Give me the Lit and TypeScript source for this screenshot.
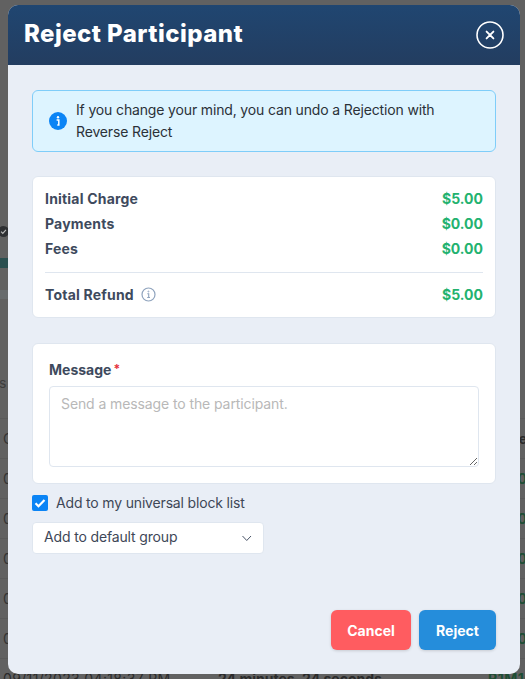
import { LitElement, html, css } from "lit";
import { customElement } from "lit/decorators.js";

@customElement("app-root")
export class AppRoot extends LitElement {
  static styles = css`
    :host { display: block; width: 525px; height: 679px; position: relative; overflow: hidden; font-family: "Inter", "Liberation Sans", sans-serif; background: #616161; }
    * { box-sizing: border-box; }
    .page { height: 679px; display: flex; flex-direction: column; background: #616161; color: #2f2f2f; overflow: hidden; }
    .check-dot { display: flex; align-items: center; justify-content: center; width: 11px; height: 11px; margin: 226px 0 0 -2px; background: #2e3033; border-radius: 50%; flex: none; }
    .check-dot svg { width: 7px; height: 7px; display: block; }
    .teal { height: 10px; width: 40px; margin-top: 21px; background: #2a4f50; flex: none; }
    .grey { height: 9px; width: 40px; margin-top: 22px; background: #676b6d; flex: none; }
    .s { margin-top: 76px; height: 16px; font-size: 14px; line-height: 16px; color: #3d3d3d; flex: none; margin-left: -1px; }
    .spacer { height: 27px; flex: none; }
    .row { height: 40px; display: flex; align-items: center; justify-content: space-between; font-size: 14px; color: #333; border-top: 1px solid #5a5a5a; flex: none; padding-left: 3px; }
    .row .g { color: #214f37; font-weight: 700; margin-right: -2px; }
    .row .h { color: #2b2b2b; font-weight: 700; margin-right: -2px; }
    .last { display: flex; height: 40px; font-size: 14px; line-height: 40px; flex: none; border-top: 1px solid #5a5a5a; padding-left: 3px; color: #2b2b2b; white-space: nowrap; }
    .last .date { width: 215px; flex: none; letter-spacing: .35px; }
    .last .dur { width: 270px; flex: none; font-weight: 700; }
    .last .code { flex: none; color: #1d4d33; font-weight: 700; letter-spacing: .5px; }

    .modal { position: absolute; left: 8px; top: 5px; width: 512px; height: 669px; background: #e9eef6; border-radius: 10px; overflow: hidden; display: flex; flex-direction: column; }
    .head { height: 60px; flex: none; display: flex; align-items: center; justify-content: space-between; padding: 0 16px; color: #fff; background: linear-gradient(#204671, #233d60); }
    h1 { margin: -3px 0 0; font-size: 24px; line-height: 28px; font-weight: 800; letter-spacing: 0.45px; }
    .close { width: 28px; height: 28px; display: block; }
    .content { flex: 1; display: flex; flex-direction: column; padding: 25px 24px 24px; }
    .alert { height: 62px; flex: none; display: flex; align-items: center; gap: 9px; padding: 0 16px; background: #ddf4ff; border: 1px solid #7fcdf9; border-radius: 6px; font-size: 14px; line-height: 22px; color: #2b3138; letter-spacing: -0.15px; }
    .alert svg { width: 18px; height: 18px; flex: none; }
    .card { background: #fff; border: 1px solid #dfe6ef; border-radius: 6px; }
    .summary { margin-top: 24px; height: 142px; padding: 9px 12px 0; flex: none; }
    .line { height: 25px; display: flex; align-items: center; justify-content: space-between; font-size: 14px; font-weight: 700; color: #3e4a5d; letter-spacing: 0.2px; }
    .amt { color: #23b26f; letter-spacing: 0; }
    .rule { height: 1px; background: #dfe6ef; margin: 11px 0 9px; }
    .total-label { display: flex; align-items: center; gap: 7px; }
    .total-label svg { width: 15px; height: 15px; }
    .message { margin-top: 25px; height: 141px; padding: 16px 16px 16px; flex: none; display: flex; flex-direction: column; }
    label.msg { height: 20px; font-size: 14px; line-height: 20px; font-weight: 700; color: #3e4a5d; margin-bottom: 6px; display: flex; gap: 2px; }
    .req { color: #e5303c; font-size: 12px; line-height: 18px; }
    textarea { display: block; width: 430px; height: 81px; flex: none; border: 1px solid #dfe6ef; border-radius: 4px; padding: 8px 11px; font: 14px/18px "Inter", "Liberation Sans", sans-serif; letter-spacing: -0.1px; background: #fff; color: #333; outline: none; resize: vertical; margin: 0; }
    textarea::placeholder { color: #b8b8b8; opacity: 1; }
    .chk { display: flex; align-items: center; gap: 8px; height: 16px; margin-top: 11px; font-size: 14px; color: #3e4757; flex: none; letter-spacing: -0.17px; }
    .chk .t { margin-top: -2px; }
    .box { width: 16px; height: 16px; background: #0b84f5; border-radius: 2px; display: block; flex: none; }
    .box svg { display: block; width: 16px; height: 16px; }
    .select { margin-top: 11px; width: 232px; height: 32px; flex: none; display: flex; align-items: center; justify-content: space-between; padding: 0 10px 0 11px; background: #fff; border: 1px solid #dfe6ef; border-radius: 4px; font-size: 14px; color: #3e4757; letter-spacing: -0.15px; }
    .select .t { margin-top: -3px; }
    .select svg { width: 12px; height: 12px; display: block; }
    .actions { margin-top: auto; display: flex; justify-content: flex-end; gap: 8px; }
    button { height: 40px; border: 0; border-radius: 6px; color: #fff; font: 700 14px "Inter", "Liberation Sans", sans-serif; box-shadow: 0 1px 3px rgba(0,0,0,.15); padding: 0; }
    .cancel { width: 80px; background: #ff5c60; }
    .reject { width: 77px; background: #258ddb; }
  `;

  render() {
    return html`
      <div class="page">
        <span class="check-dot"><svg viewBox="0 0 8 8" fill="none" stroke="#b9b9b9" stroke-width="1.3"><path d="M1.2 4.2l2 2 3.6-4"/></svg></span>
        <div class="teal"></div>
        <div class="grey"></div>
        <div class="s">s</div>
        <div class="spacer"></div>
        <div class="row"><span>O</span><span class="h">le</span></div>
        ${["0", "0", "0", "0", "0"].map(
          (v) => html`<div class="row"><span>${v}</span><span class="g">.0</span></div>`
        )}
        <div class="last"><span class="date">09/11/2023 04:18:37 PM</span><span class="dur">24 minutes, 24 seconds</span><span class="code">R1M10</span></div>
      </div>
      <div class="modal">
        <div class="head">
          <h1>Reject Participant</h1>
          <svg class="close" viewBox="0 0 28 28" fill="none" stroke="#fff"><circle cx="14" cy="14" r="13" stroke-width="1.6"/><path d="M10.6 10.6l6.8 6.8M17.4 10.6l-6.8 6.8" stroke-width="1.9" stroke-linecap="round"/></svg>
        </div>
        <div class="content">
          <div class="alert">
            <svg viewBox="0 0 18 18"><circle cx="9" cy="9" r="9" fill="#0b84f5"/><circle cx="9" cy="5.2" r="1.2" fill="#fff"/><path d="M7.6 8h2.2v5H8.3" fill="none" stroke="#fff" stroke-width="1.5"/></svg>
            <span>If you change your mind, you can undo a Rejection with Reverse Reject</span>
          </div>
          <div class="card summary">
            <div class="line"><span>Initial Charge</span><span class="amt">$5.00</span></div>
            <div class="line"><span>Payments</span><span class="amt">$0.00</span></div>
            <div class="line"><span>Fees</span><span class="amt">$0.00</span></div>
            <div class="rule"></div>
            <div class="line">
              <span class="total-label">Total Refund
                <svg viewBox="0 0 15 15" fill="none" stroke="#8fa3bd"><circle cx="7.5" cy="7.5" r="6.5" stroke-width="1.2"/><path d="M6.3 6.7h1.4v3.6M6.2 10.5h2.8" stroke-width="1.1"/><circle cx="7.4" cy="4.5" r=".5" stroke-width=".9"/></svg>
              </span>
              <span class="amt">$5.00</span>
            </div>
          </div>
          <div class="card message">
            <label class="msg"><span>Message</span><span class="req">*</span></label>
            <textarea placeholder="Send a message to the participant."></textarea>
          </div>
          <div class="chk">
            <span class="box"><svg viewBox="0 0 16 16" fill="none" stroke="#fff" stroke-width="2.2"><path d="M3.5 8.2l3 3 6-6.2"/></svg></span>
            <span class="t">Add to my universal block list</span>
          </div>
          <div class="select">
            <span class="t">Add to default group</span>
            <svg viewBox="0 0 12 12" fill="none" stroke="#4a5568" stroke-width="1"><path d="M1.5 4l4.25 4.5L10 4"/></svg>
          </div>
          <div class="actions">
            <button class="cancel">Cancel</button>
            <button class="reject">Reject</button>
          </div>
        </div>
      </div>
    `;
  }
}
